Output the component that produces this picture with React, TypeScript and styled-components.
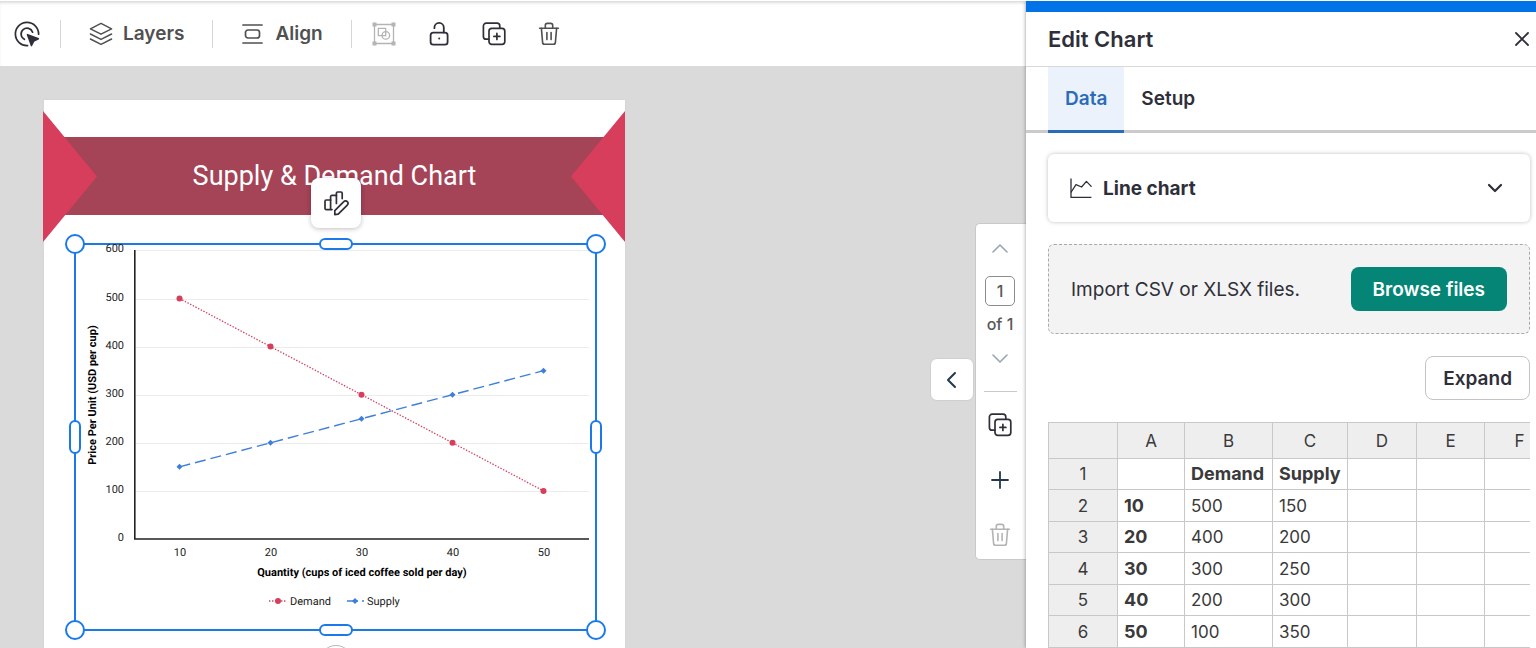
import React, { useState } from 'react';
import styled, { createGlobalStyle } from 'styled-components';

const GlobalStyle = createGlobalStyle`
  *, *::before, *::after { box-sizing: border-box; }
  body { margin: 0; font-family: Inter, sans-serif; color: #2f2f3a; background: #fff; }
  button, input, select { font: inherit; color: inherit; }
  button { border: 0; padding: 0; background: none; cursor: pointer; }
`;

/* ---------- layout ---------- */

const Shell = styled.div`
  display: flex;
  height: 100vh;
  overflow: hidden;
  border-top: 1px solid #fff;
`;

const Editor = styled.main`
  flex: 1;
  min-width: 0;
  display: flex;
  flex-direction: column;
`;

const Toolbar = styled.div`
  display: flex;
  align-items: center;
  flex: none;
  height: 65px;
  background: #fff;
  box-shadow: inset 0 3px 3px -1px #dcdcdc;
`;

const ToolGroup = styled.div<{ $pad: string; $gap?: number }>`
  display: flex;
  align-items: center;
  gap: ${(p) => p.$gap ?? 0}px;
  padding: ${(p) => p.$pad};
`;

const ToolDivider = styled.span`
  width: 1px;
  height: 28px;
  background: #d6d6d6;
`;

const ToolButton = styled.button<{ $tone?: string }>`
  display: flex;
  align-items: center;
  gap: 10px;
  height: 36px;
  font-size: 19px;
  font-weight: 600;
  color: ${(p) => p.$tone ?? '#505050'};
`;

const Canvas = styled.div`
  flex: 1;
  min-height: 0;
  display: flex;
  align-items: flex-start;
  overflow: hidden;
  background: #dadada;
`;

const Workspace = styled.div`
  flex: 1;
  min-width: 0;
  padding: 34px 0 0 44px;
`;

/* ---------- document ---------- */

const Paper = styled.article`
  width: 581px;
  height: 752px;
  padding-top: 37px;
  background: #fff;
  box-shadow: 0 0 2px #cfcfcf;
`;

const Banner = styled.header`
  position: relative;
  display: flex;
  align-items: center;
  justify-content: center;
  height: 78px;
  background: #a54357;
`;

const DocTitle = styled.h1`
  margin: 0;
  font: 400 27px/32px Roboto, sans-serif;
  color: #fff;
`;

const Ribbon = styled.span<{ $side: 'left' | 'right' }>`
  position: absolute;
  top: -26px;
  ${(p) => (p.$side === 'left' ? 'left: -1px' : 'right: 0')};
  width: 54px;
  height: 131px;
  background: #d63e5c;
  clip-path: ${(p) =>
    p.$side === 'left' ? 'polygon(0 0, 100% 50%, 0 100%)' : 'polygon(100% 0, 0 50%, 100% 100%)'};
`;

const Selection = styled.section`
  position: relative;
  width: 523px;
  height: 388px;
  margin: 28px 0 0 30px;
  border: 2px solid #1a7aea;
`;

const CornerHandle = styled.span<{ $x: 'left' | 'right'; $y: 'top' | 'bottom' }>`
  position: absolute;
  ${(p) => p.$x}: -11px;
  ${(p) => p.$y}: -11px;
  width: 20px;
  height: 20px;
  border: 2px solid #1a7aea;
  border-radius: 50%;
  background: #fff;
`;

const EdgeHandle = styled.span<{ $edge: 'left' | 'right' | 'top' | 'bottom' }>`
  position: absolute;
  ${(p) => p.$edge}: -7px;
  ${(p) =>
    p.$edge === 'left' || p.$edge === 'right'
      ? 'width: 12px; height: 34px; top: calc(50% - 17px);'
      : 'width: 34px; height: 12px; left: calc(50% - 17px);'}
  border: 2px solid #1a7aea;
  border-radius: 6px;
  background: #fff;
`;

const EditBadge = styled.button`
  position: absolute;
  top: -67px;
  left: calc(50% - 25px);
  display: grid;
  place-items: center;
  width: 50px;
  height: 50px;
  border-radius: 8px;
  background: #fff;
  box-shadow: 0 1px 5px rgba(0, 0, 0, 0.25);
`;

const RotateHandle = styled.button`
  position: absolute;
  top: 400px;
  left: calc(50% - 17px);
  width: 34px;
  height: 34px;
  border: 1px solid #b8b8bc;
  border-radius: 50%;
  background: #fff;
`;

const ChartSvg = styled.svg`
  display: block;
  width: 520px;
  height: 384px;
  overflow: visible;
  font-family: Roboto, sans-serif;
  font-size: 11px;
  text-rendering: geometricPrecision;
  fill: #222;
`;

const AxisTitle = styled.text`
  font-size: 11px;
  font-weight: 700;
  fill: #000;
  text-anchor: middle;
`;

/* ---------- page rail ---------- */

const CollapseButton = styled.button`
  display: grid;
  place-items: center;
  width: 44px;
  height: 43px;
  margin: 292px 1px 0 0;
  border: 1px solid #cfcfcf;
  border-radius: 7px;
  background: #fff;
  color: #22384f;
`;

const Rail = styled.nav`
  display: flex;
  flex-direction: column;
  align-items: center;
  width: 51px;
  margin-top: 157px;
  padding: 8px 2px 8px 0;
  border: 1px solid #c9c9c9;
  border-right: 0;
  border-radius: 5px 0 0 5px;
  background: #fff;
`;

const RailButton = styled.button<{ $tone?: string }>`
  display: grid;
  place-items: center;
  width: 32px;
  height: 32px;
  color: ${(p) => p.$tone ?? '#2f2f3a'};
`;

const PageBox = styled.label`
  display: flex;
  flex-direction: column;
  align-items: center;
  gap: 8px;
  margin: 12px 0 8px;
  font-size: 16px;
  line-height: 20px;
  font-weight: 500;
  color: #585858;
`;

const PageInput = styled.input`
  width: 30px;
  height: 30px;
  padding: 0;
  border: 1px solid #8c8c8c;
  border-radius: 5px;
  background: #fff;
  text-align: center;
`;

const RailDivider = styled.hr`
  width: 33px;
  height: 1px;
  margin: 17px 0;
  border: 0;
  background: #c9c9c9;
`;

const RailActions = styled.div`
  display: flex;
  flex-direction: column;
  gap: 23px;
`;

/* ---------- side panel ---------- */

const Panel = styled.aside`
  position: relative;
  flex: none;
  width: 510px;
  border-top: 11px solid #0273e6;
  background: #fff;
  box-shadow: 0 0 4px rgba(0, 0, 0, 0.4);
`;

const PanelHeader = styled.header`
  display: flex;
  align-items: center;
  justify-content: space-between;
  height: 55px;
  padding: 0 2px 0 22px;
  border-bottom: 1px solid #d8d8d8;
`;

const PanelTitle = styled.h2`
  margin: 0;
  font-size: 22px;
  line-height: 28px;
  font-weight: 600;
`;

const CloseButton = styled.button`
  display: grid;
  place-items: center;
  width: 24px;
  height: 24px;
`;

const Tabs = styled.div`
  display: flex;
  height: 66px;
  padding-left: 22px;
  box-shadow: inset 0 -3px #cbcbcb;
`;

const Tab = styled.button<{ $active: boolean }>`
  padding: 0 17px;
  font-size: 19px;
  font-weight: 600;
  color: ${(p) => (p.$active ? '#2b6cb8' : '#2f2f3a')};
  background: ${(p) => (p.$active ? '#ebf2fc' : 'transparent')};
  border-bottom: 3px solid ${(p) => (p.$active ? '#2b6cb8' : 'transparent')};
`;

const PanelBody = styled.div`
  display: flex;
  flex-direction: column;
  gap: 22px;
  padding: 21px 6px 0 22px;
`;

const ChartTypeField = styled.label`
  display: flex;
  align-items: center;
  gap: 10px;
  height: 68px;
  padding: 0 26px 0 21px;
  border-radius: 6px;
  background: #fff;
  box-shadow: 0 0 4px rgba(0, 0, 0, 0.26);
`;

const ChartTypeSelect = styled.select`
  flex: 1;
  min-width: 0;
  height: 40px;
  padding: 0;
  border: 0;
  background: none;
  appearance: none;
  font-size: 19px;
  font-weight: 700;
`;

const ImportBox = styled.div`
  display: flex;
  align-items: center;
  justify-content: space-between;
  height: 90px;
  padding: 0 22px;
  border: 1px dashed #a9a9a9;
  border-radius: 6px;
  background: #f3f3f3;
  font-size: 19px;
`;

const BrowseButton = styled.button`
  height: 44px;
  padding: 0 22px;
  border-radius: 8px;
  background: #048576;
  color: #fff;
  font-weight: 600;
`;

const ExpandButton = styled.button`
  align-self: flex-end;
  height: 44px;
  padding: 0 17px;
  border: 1px solid #c4c4c4;
  border-radius: 8px;
  background: #fff;
  font-size: 19px;
  font-weight: 600;
`;

const SheetScroll = styled.div`
  overflow: hidden;
`;

const Sheet = styled.table`
  width: 506px;
  table-layout: fixed;
  border-collapse: collapse;
  font-size: 17px;
  line-height: 22px;
  color: #3a3a3a;

  th, td { border: 1px solid #c8c8c8; padding: 0 6px; font-weight: 400; }
  td { text-align: left; white-space: nowrap; }
  tr { height: 31px; }
  tr:nth-child(even) { height: 32px; }
  thead tr { height: 36px; }
`;

const SheetHead = styled.th`
  background: #eee;
  text-align: center;
`;

const SheetCell = styled.td<{ $bold: boolean }>`
  && {
    font-size: ${(p) => (p.$bold ? 18 : 17)}px;
    font-weight: ${(p) => (p.$bold ? 700 : 400)};
  }
`;

/* ---------- icons ---------- */

type IconProps = { size?: number; weight?: number; children: React.ReactNode };

const Icon = ({ size = 24, weight = 2, children }: IconProps) => (
  <svg
    width={size}
    height={size}
    viewBox={`0 0 ${size} ${size}`}
    fill="none"
    stroke="currentColor"
    strokeWidth={weight}
    strokeLinecap="round"
    strokeLinejoin="round"
    aria-hidden="true"
  >
    {children}
  </svg>
);

const ClickIcon = () => (
  <Icon size={26} weight={1.7}>
    <path d="M24.6 13.2A11.6 11.6 0 1 0 13.6 24.6" />
    <path d="M18.6 11.2A5.9 5.9 0 1 0 10.4 18.3" />
    <path d="M13.4 13.6 24.4 17.8 19.8 20 17.4 24.6z" fill="currentColor" strokeWidth="1.5" />
  </Icon>
);

const LayersIcon = () => (
  <Icon weight={1.5}>
    <path d="M12 1.4 22.6 6.8 12 12.2 1.4 6.8z" />
    <path d="M1.4 12 12 17.4 22.6 12" />
    <path d="M1.4 17 12 22.4 22.6 17" />
  </Icon>
);

const AlignIcon = () => (
  <Icon weight={1.7}>
    <path d="M2 3H21M2 21H21" />
    <rect x="4.5" y="8" width="14" height="8" rx="2.5" />
  </Icon>
);

const GroupIcon = () => (
  <Icon weight={1.3}>
    <rect x="2.5" y="2.5" width="19" height="19" />
    <rect x="6.3" y="6.3" width="7.4" height="7.4" />
    <circle cx="13.8" cy="13.4" r="3.8" />
    <g fill="currentColor" stroke="none">
      <rect x="0.5" y="0.5" width="4" height="4" />
      <rect x="19.5" y="0.5" width="4" height="4" />
      <rect x="0.5" y="19.5" width="4" height="4" />
      <rect x="19.5" y="19.5" width="4" height="4" />
    </g>
  </Icon>
);

const UnlockIcon = () => (
  <Icon weight={1.8}>
    <rect x="3.6" y="10.6" width="17" height="12" rx="2.6" />
    <path d="M7.4 6.2V5.6a4.7 4.7 0 0 1 9.4 0v5" />
    <circle cx="12.2" cy="16.6" r="1" fill="currentColor" stroke="none" />
  </Icon>
);

const DuplicateIcon = () => (
  <Icon weight={1.7}>
    <rect x="7" y="6.4" width="15.8" height="16" rx="2.8" />
    <path d="M6.8 17.2H4.2a2.8 2.8 0 0 1-2.8-2.8V4a2.8 2.8 0 0 1 2.8-2.8H15A2.8 2.8 0 0 1 17.8 4v2.2" />
    <path d="M14.9 11.4v6M11.9 14.4h6" />
  </Icon>
);

const TrashIcon = () => (
  <Icon weight={1.6}>
    <path d="M2.6 6.2H21.4" />
    <path d="M8.3 6V3.4a2 2 0 0 1 2-2h3.4a2 2 0 0 1 2 2V6" />
    <path d="M4.4 6.4 5.6 20.4a2 2 0 0 0 2 1.9h8.8a2 2 0 0 0 2-1.9L19.6 6.4" />
    <path d="M9.9 10.6v7M14.1 10.6v7" />
  </Icon>
);

const EditChartIcon = () => (
  <Icon size={26} weight={1.7}>
    <path d="M9 19.6H3.2a1.2 1.2 0 0 1-1.2-1.2V11.2a1.2 1.2 0 0 1 1.2-1.2H7.600V19" />
    <path d="M7.6 10V6.600a1.2 1.2 0 0 1 1.2-1.2H13.400V13.4" />
    <path d="M13.4 5.4V3.2A1.2 1.2 0 0 1 14.6 2H18a1.2 1.2 0 0 1 1.2 1.2V8.6" />
    <path d="M11.8 24.6v-4L20.800 11.6a2.3 2.3 0 0 1 3.5 0 2.3 2.3 0 0 1 0 3.5L15.2 24.2z" />
  </Icon>
);

const LineChartIcon = () => (
  <Icon weight={1.3}>
    <path d="M2 2.500V21.400H22.400" strokeLinecap="butt" />
    <path d="M2.200 16 7 8.600 12.600 11 17.400 5.400 22.200 10.400" />
  </Icon>
);

const Chevron = ({ d, weight = 2, size = 18 }: { d: string; weight?: number; size?: number }) => (
  <Icon size={size} weight={weight}>
    <path d={d} />
  </Icon>
);

/* ---------- chart ---------- */

const QUANTITIES = [10, 20, 30, 40, 50];
const DEMAND = [500, 400, 300, 200, 100];
const SUPPLY = [150, 200, 250, 300, 350];
const TICKS = [0, 100, 200, 300, 400, 500, 600];

const xAt = (i: number) => 103.5 + i * 91;
const yAt = (v: number) => 294 - v * 0.481;
const points = (values: number[]) => values.map((v, i) => `${xAt(i)},${yAt(v)}`).join(' ');

const Diamond = ({ x, y }: { x: number; y: number }) => (
  <path d={`M${x - 3} ${y}L${x} ${y - 3}L${x + 3} ${y}L${x} ${y + 3}z`} fill="#3d7fd9" />
);

const SupplyDemandChart = () => (
  <ChartSvg viewBox="0 0 520 384" role="img" aria-label="Supply and demand line chart">
    {TICKS.map((t) => (
      <g key={t}>
        {t > 0 && <path d={`M60 ${Math.round(yAt(t)) + 0.5}H513`} stroke="#ececec" />}
        <text x="48" y={yAt(t) + 2} textAnchor="end">{t}</text>
      </g>
    ))}
    <path d="M58.8 5V294H513" fill="none" stroke="#222" strokeWidth="1.6" />
    {QUANTITIES.map((q, i) => (
      <text key={q} x={xAt(i) + 0.5} y="311" textAnchor="middle">{q}</text>
    ))}
    <polyline points={points(DEMAND)} fill="none" stroke="#d63e5c" strokeWidth="1.3" strokeDasharray="1.4 1.6" />
    <polyline points={points(SUPPLY)} fill="none" stroke="#3d7fd9" strokeWidth="1.4" strokeDasharray="11 5" />
    {DEMAND.map((v, i) => <circle key={v} cx={xAt(i)} cy={yAt(v)} r="3" fill="#d63e5c" />)}
    {SUPPLY.map((v, i) => <Diamond key={v} x={xAt(i)} y={yAt(v)} />)}
    <AxisTitle x="286" y="331">Quantity (cups of iced coffee sold per day)</AxisTitle>
    <AxisTitle transform="translate(20 150) rotate(-90)">Price Per Unit (USD per cup)</AxisTitle>
    <path d="M193 356H210" stroke="#d63e5c" strokeWidth="1.3" strokeDasharray="1.4 1.6" />
    <circle cx="202" cy="356" r="3" fill="#d63e5c" />
    <text x="214" y="360">Demand</text>
    <path d="M271 356H288" stroke="#3d7fd9" strokeWidth="1.4" strokeDasharray="11 4" />
    <Diamond x={279} y={356} />
    <text x="291" y="360">Supply</text>
  </ChartSvg>
);

/* ---------- data ---------- */

const COLUMNS = ['A', 'B', 'C', 'D', 'E', 'F'];
const WIDTHS = [69, 67, 88, 75, 69, 68, 70];
const ROWS: string[][] = [
  ['', 'Demand', 'Supply'],
  ...QUANTITIES.map((q, i) => [String(q), String(DEMAND[i]), String(SUPPLY[i])]),
];

export default function App() {
  const [tab, setTab] = useState('Data');
  const [page, setPage] = useState('1');

  return (
    <>
      <GlobalStyle />
      <Shell>
        <Editor>
          <Toolbar>
            <ToolGroup $pad="0 20px 0 14px">
              <ToolButton aria-label="Select" $tone="#2f2f3a"><ClickIcon /></ToolButton>
            </ToolGroup>
            <ToolDivider />
            <ToolGroup $pad="0 28px">
              <ToolButton><LayersIcon />Layers</ToolButton>
            </ToolGroup>
            <ToolDivider />
            <ToolGroup $pad="0 28px">
              <ToolButton><AlignIcon />Align</ToolButton>
            </ToolGroup>
            <ToolDivider />
            <ToolGroup $pad="0 20px" $gap={31}>
              <ToolButton aria-label="Group" $tone="#b4b4b4"><GroupIcon /></ToolButton>
              <ToolButton aria-label="Unlock" $tone="#2f2f3a"><UnlockIcon /></ToolButton>
              <ToolButton aria-label="Duplicate" $tone="#2f2f3a"><DuplicateIcon /></ToolButton>
              <ToolButton aria-label="Delete"><TrashIcon /></ToolButton>
            </ToolGroup>
          </Toolbar>

          <Canvas>
            <Workspace>
              <Paper>
                <Banner>
                  <DocTitle>Supply &amp; Demand Chart</DocTitle>
                  <Ribbon $side="left" />
                  <Ribbon $side="right" />
                </Banner>
                <Selection>
                  <SupplyDemandChart />
                  <CornerHandle $x="left" $y="top" />
                  <CornerHandle $x="right" $y="top" />
                  <CornerHandle $x="left" $y="bottom" />
                  <CornerHandle $x="right" $y="bottom" />
                  <EdgeHandle $edge="top" />
                  <EdgeHandle $edge="right" />
                  <EdgeHandle $edge="bottom" />
                  <EdgeHandle $edge="left" />
                  <EditBadge aria-label="Edit chart"><EditChartIcon /></EditBadge>
                  <RotateHandle aria-label="Rotate" />
                </Selection>
              </Paper>
            </Workspace>
            <CollapseButton aria-label="Collapse panel">
              <Chevron d="M12 2 5 9l7 7" />
            </CollapseButton>
            <Rail aria-label="Pages">
              <RailButton aria-label="Previous page" $tone="#9aa5b1"><Chevron d="M2 13 9 6l7 7" weight={1.6} /></RailButton>
              <PageBox>
                <PageInput aria-label="Page" value={page} onChange={(e) => setPage(e.target.value)} />
                of 1
              </PageBox>
              <RailButton aria-label="Next page" $tone="#9aa5b1"><Chevron d="M2 6l7 7 7-7" weight={1.6} /></RailButton>
              <RailDivider />
              <RailActions>
                <RailButton aria-label="Duplicate page"><DuplicateIcon /></RailButton>
                <RailButton aria-label="Add page" $tone="#22384f"><Chevron d="M9 1v16M1 9h16" weight={1.8} /></RailButton>
                <RailButton aria-label="Delete page" $tone="#b4b4b4"><TrashIcon /></RailButton>
              </RailActions>
            </Rail>
          </Canvas>
        </Editor>

        <Panel>
          <PanelHeader>
            <PanelTitle>Edit Chart</PanelTitle>
            <CloseButton aria-label="Close"><Chevron d="M1 1l12 12M13 1 1 13" size={14} weight={1.8} /></CloseButton>
          </PanelHeader>
          <Tabs role="tablist">
            {['Data', 'Setup'].map((name) => (
              <Tab key={name} role="tab" aria-selected={tab === name} $active={tab === name} onClick={() => setTab(name)}>
                {name}
              </Tab>
            ))}
          </Tabs>
          <PanelBody>
            <ChartTypeField>
              <LineChartIcon />
              <ChartTypeSelect aria-label="Chart type">
                <option>Line chart</option>
              </ChartTypeSelect>
              <Chevron d="M3 6l6 6 6-6" weight={2.2} />
            </ChartTypeField>
            <ImportBox>
              <span>Import CSV or XLSX files.</span>
              <BrowseButton>Browse files</BrowseButton>
            </ImportBox>
            <ExpandButton>Expand</ExpandButton>
            <SheetScroll>
              <Sheet>
                <colgroup>
                  {WIDTHS.map((w, i) => <col key={i} width={w} />)}
                </colgroup>
                <thead>
                  <tr>
                    <SheetHead aria-label="Row" />
                    {COLUMNS.map((c) => <SheetHead key={c} scope="col">{c}</SheetHead>)}
                  </tr>
                </thead>
                <tbody>
                  {ROWS.map((row, r) => (
                    <tr key={r}>
                      <SheetHead scope="row">{r + 1}</SheetHead>
                      {COLUMNS.map((c, i) => (
                        <SheetCell key={c} $bold={r === 0 || i === 0}>{row[i] ?? ''}</SheetCell>
                      ))}
                    </tr>
                  ))}
                </tbody>
              </Sheet>
            </SheetScroll>
          </PanelBody>
        </Panel>
      </Shell>
    </>
  );
}
